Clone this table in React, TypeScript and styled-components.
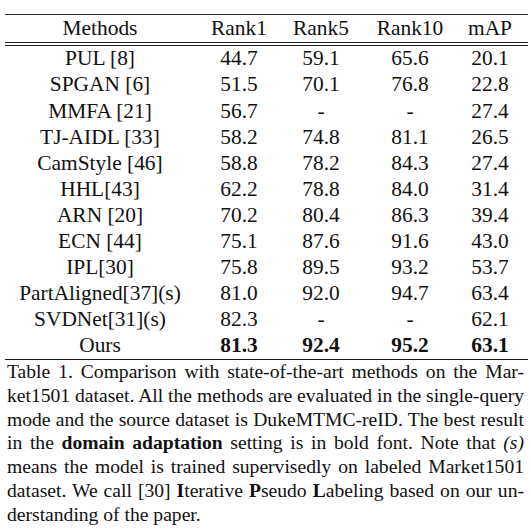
import React from "react";
import styled, { createGlobalStyle } from "styled-components";

const GlobalStyle = createGlobalStyle`
  html, body {
    margin: 0;
    padding: 0;
    background: #ffffff;
  }
`;

const COLS = "190px 88px 76px 102px 67px";

const Page = styled.div`
  width: 531px;
  padding-top: 14px;
  box-sizing: border-box;
  font-family: "Liberation Serif", "Times New Roman", serif;
  color: #111111;
`;

const Table = styled.div`
  margin-left: 5px;
  width: 523px;
  border-top: 1px solid #2a2a2a;
  border-bottom: 1px solid #1a1a1a;
`;

const HeadRow = styled.div`
  display: grid;
  grid-template-columns: ${COLS};
  height: 27px;
  align-items: center;
  border-bottom: 4px double #222222;
`;

const Row = styled.div`
  display: grid;
  grid-template-columns: ${COLS};
  height: 26.1px;
  align-items: center;
`;

const Cell = styled.div<{ $bold?: boolean; $last?: boolean }>`
  font-size: 21.4px;
  line-height: 1;
  text-align: center;
  white-space: nowrap;
  font-weight: ${({ $bold }) => ($bold ? 700 : 400)};
  padding-right: ${({ $last }) => ($last ? "9px" : "0")};
`;

const Caption = styled.div`
  padding: 0 7px 0 7px;
  font-size: 19.6px;
  line-height: 23.75px;
`;

const CaptionLine = styled.div<{ $last?: boolean }>`
  text-align: ${({ $last }) => ($last ? "left" : "justify")};
  text-align-last: ${({ $last }) => ($last ? "left" : "justify")};
  white-space: nowrap;
`;

type Entry = { name: string; vals: string[]; bold?: boolean };

const rows: Entry[] = [
  { name: "PUL [8]", vals: ["44.7", "59.1", "65.6", "20.1"] },
  { name: "SPGAN [6]", vals: ["51.5", "70.1", "76.8", "22.8"] },
  { name: "MMFA [21]", vals: ["56.7", "-", "-", "27.4"] },
  { name: "TJ-AIDL [33]", vals: ["58.2", "74.8", "81.1", "26.5"] },
  { name: "CamStyle [46]", vals: ["58.8", "78.2", "84.3", "27.4"] },
  { name: "HHL[43]", vals: ["62.2", "78.8", "84.0", "31.4"] },
  { name: "ARN [20]", vals: ["70.2", "80.4", "86.3", "39.4"] },
  { name: "ECN [44]", vals: ["75.1", "87.6", "91.6", "43.0"] },
  { name: "IPL[30]", vals: ["75.8", "89.5", "93.2", "53.7"] },
  { name: "PartAligned[37](s)", vals: ["81.0", "92.0", "94.7", "63.4"] },
  { name: "SVDNet[31](s)", vals: ["82.3", "-", "-", "62.1"] },
  { name: "Ours", vals: ["81.3", "92.4", "95.2", "63.1"], bold: true },
];

const headers = ["Methods", "Rank1", "Rank5", "Rank10", "mAP"];

export default function App() {
  return (
    <Page>
      <GlobalStyle />
      <Table>
        <HeadRow>
          {headers.map((h, i) => (
            <Cell key={h} $last={i === headers.length - 1}>
              {h}
            </Cell>
          ))}
        </HeadRow>
        {rows.map((r) => (
          <Row key={r.name}>
            <Cell>{r.name}</Cell>
            {r.vals.map((v, i) => (
              <Cell key={i} $bold={r.bold} $last={i === r.vals.length - 1}>
                {v}
              </Cell>
            ))}
          </Row>
        ))}
      </Table>
      <Caption>
        <CaptionLine>
          Table 1. Comparison with state-of-the-art methods on the Mar-
        </CaptionLine>
        <CaptionLine>
          ket1501 dataset. All the methods are evaluated in the single-query
        </CaptionLine>
        <CaptionLine>
          mode and the source dataset is DukeMTMC-reID. The best result
        </CaptionLine>
        <CaptionLine>
          in the <b>domain adaptation</b> setting is in bold font. Note that{" "}
          <i>(s)</i>
        </CaptionLine>
        <CaptionLine>
          means the model is trained supervisedly on labeled Market1501
        </CaptionLine>
        <CaptionLine>
          dataset. We call [30] <b>I</b>terative <b>P</b>seudo <b>L</b>abeling
          based on our un-
        </CaptionLine>
        <CaptionLine $last>derstanding of the paper.</CaptionLine>
      </Caption>
    </Page>
  );
}
